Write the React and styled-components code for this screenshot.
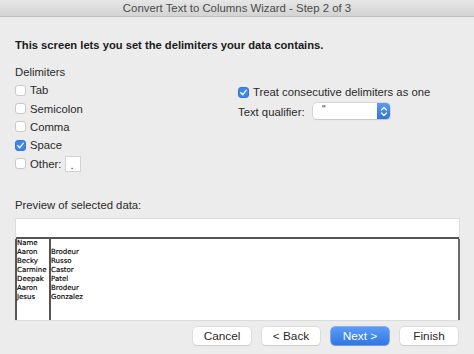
import React from "react";
import styled, { createGlobalStyle } from "styled-components";

const GlobalStyle = createGlobalStyle`
  html, body {
    margin: 0;
    padding: 0;
    background: #ececec;
  }
  body {
    font-family: "Liberation Sans", Arial, sans-serif;
    color: #222;
  }
`;

const Window = styled.div`
  width: 474px;
  height: 354px;
  background: #ececec;
  display: flex;
  flex-direction: column;
  overflow: hidden;
`;

const TitleBar = styled.div`
  height: 16px;
  background: linear-gradient(#e6e6e6, #d3d3d3);
  border-bottom: 1px solid #bdbdbd;
  display: flex;
  align-items: center;
  justify-content: center;
  font-size: 11.4px;
  color: #4b4b4b;
`;

const Body = styled.div`
  padding: 20px 15px 0 15px;
  display: flex;
  flex-direction: column;
`;

const Heading = styled.div`
  font-size: 11.2px;
  font-weight: bold;
  line-height: 16px;
  color: #1a1a1a;
`;

const Columns = styled.div`
  display: grid;
  grid-template-columns: 223px 1fr;
  margin-top: 10px;
`;

const Column = styled.div`
  display: flex;
  flex-direction: column;
  padding-top: ${(p) => p.$top || 0}px;
`;

const Label = styled.div`
  font-size: 11.3px;
  line-height: 16px;
  color: #2a2a2a;
  height: ${(p) => p.$h || 16}px;
  display: flex;
  align-items: center;
`;

const Row = styled.div`
  display: flex;
  align-items: center;
  height: 18.4px;
  gap: 4px;
  font-size: 11.3px;
  color: #2a2a2a;
`;

const Box = styled.span`
  width: 11px;
  height: 11px;
  border-radius: 3px;
  box-sizing: border-box;
  background: ${(p) => (p.$on ? "#3d86ee" : "#fff")};
  border: 1px solid ${(p) => (p.$on ? "#3579e0" : "#c9c9c9")};
  display: inline-flex;
  align-items: center;
  justify-content: center;
  flex-shrink: 0;
`;

const SmallInput = styled.span`
  width: 16px;
  height: 16px;
  box-sizing: border-box;
  background: #fff;
  border: 1px solid #d2d2d2;
  font-size: 11px;
  display: inline-flex;
  align-items: flex-end;
  padding: 0 0 2px 4px;
  line-height: 8px;
`;

const Select = styled.div`
  width: 77px;
  height: 16px;
  margin-top: -1px;
  background: #fff;
  border-radius: 4px;
  box-shadow: 0 0 0 0.5px #c4c4c4, 0 1px 1px rgba(0, 0, 0, 0.15);
  display: flex;
  overflow: hidden;
`;

const SelectValue = styled.div`
  flex: 1;
  font-size: 10px;
  padding-left: 9px;
  line-height: 14px;
  color: #333;
`;

const SelectArrow = styled.div`
  width: 13px;
  background: linear-gradient(#5a9bf5, #2e74e4);
  display: flex;
  align-items: center;
  justify-content: center;
`;

const QualifierRow = styled.div`
  display: flex;
  align-items: center;
  height: 19px;
  margin-top: 1px;
  font-size: 11.3px;
  color: #2a2a2a;
`;

const QualifierLabel = styled.span`
  width: 75px;
`;

const PreviewLabel = styled.div`
  font-size: 11.3px;
  color: #2a2a2a;
  margin-top: 24px;
  line-height: 16px;
`;

const Preview = styled.div`
  margin-top: 5px;
  width: 445px;
  height: 103px;
  background: #fff;
  border: 1px solid #dcdcdc;
  box-sizing: border-box;
  display: flex;
  flex-direction: column;
`;

const PreviewHeader = styled.div`
  height: 18px;
  border-bottom: 2px solid #555;
`;

const Table = styled.div`
  flex: 1;
  display: flex;
  border-left: 2px solid #555;
  border-right: 2px solid #6a6a6a;
  margin-left: -1px;
  margin-right: -1px;
`;

const Col = styled.div`
  width: ${(p) => (p.$w ? `${p.$w}px` : "auto")};
  flex: ${(p) => (p.$w ? "none" : 1)};
  border-right: ${(p) => (p.$w ? "2px solid #555" : "none")};
  padding: 0;
  font-family: "DejaVu Sans", sans-serif;
  font-size: 7px;
  line-height: 9px;
  color: #000;
  -webkit-text-stroke: 0.15px #000;
`;

const Cell = styled.div`
  white-space: nowrap;
`;

const Buttons = styled.div`
  display: flex;
  justify-content: flex-end;
  gap: 11px;
  margin-top: 6px;
  padding-right: 1px;
`;

const Button = styled.div`
  width: 58px;
  height: 18px;
  border-radius: 4px;
  box-sizing: border-box;
  display: flex;
  align-items: center;
  justify-content: center;
  font-size: 11.8px;
  color: ${(p) => (p.$primary ? "#fff" : "#2a2a2a")};
  background: ${(p) =>
    p.$primary ? "linear-gradient(#5c9cf6, #2f76e6)" : "#fff"};
  box-shadow: ${(p) =>
    p.$primary
      ? "0 0 0 0.5px #2f6fd6, 0 1px 1px rgba(0,0,0,0.15)"
      : "0 0 0 0.5px #cfcfcf, 0 1px 1px rgba(0,0,0,0.15)"};
`;

const Check = () => (
  <svg width="9" height="9" viewBox="0 0 10 10">
    <path
      d="M2 5.2 L4.2 7.4 L8 2.6"
      fill="none"
      stroke="#fff"
      strokeWidth="1.6"
      strokeLinecap="round"
      strokeLinejoin="round"
    />
  </svg>
);

const Checkbox = ({ on }) => <Box $on={on}>{on && <Check />}</Box>;

const Arrows = () => (
  <svg width="8" height="11" viewBox="0 0 8 11">
    <path
      d="M1.5 4 L4 1.5 L6.5 4 M1.5 7 L4 9.5 L6.5 7"
      fill="none"
      stroke="#fff"
      strokeWidth="1.3"
      strokeLinecap="round"
      strokeLinejoin="round"
    />
  </svg>
);

const firstNames = ["Name", "Aaron", "Becky", "Carmine", "Deepak", "Aaron", "Jesus"];
const lastNames = ["", "Brodeur", "Russo", "Castor", "Patel", "Brodeur", "Gonzalez"];

const delimiters = [
  { label: "Tab", on: false },
  { label: "Semicolon", on: false },
  { label: "Comma", on: false },
  { label: "Space", on: true },
];

export default function App() {
  return (
    <Window>
      <GlobalStyle />
      <TitleBar>Convert Text to Columns Wizard - Step 2 of 3</TitleBar>
      <Body>
        <Heading>This screen lets you set the delimiters your data contains.</Heading>
        <Columns>
          <Column>
            <Label $h={18}>Delimiters</Label>
            {delimiters.map((d) => (
              <Row key={d.label}>
                <Checkbox on={d.on} />
                {d.label}
              </Row>
            ))}
            <Row>
              <Checkbox on={false} />
              Other:
              <SmallInput>.</SmallInput>
            </Row>
          </Column>
          <Column $top={20}>
            <Row>
              <Checkbox on />
              Treat consecutive delimiters as one
            </Row>
            <QualifierRow>
              <QualifierLabel>Text qualifier:</QualifierLabel>
              <Select>
                <SelectValue>"</SelectValue>
                <SelectArrow>
                  <Arrows />
                </SelectArrow>
              </Select>
            </QualifierRow>
          </Column>
        </Columns>
        <PreviewLabel>Preview of selected data:</PreviewLabel>
        <Preview>
          <PreviewHeader />
          <Table>
            <Col $w={32}>
              {firstNames.map((n, i) => (
                <Cell key={i}>{n}</Cell>
              ))}
            </Col>
            <Col>
              {lastNames.map((n, i) => (
                <Cell key={i}>{n || "\u00a0"}</Cell>
              ))}
            </Col>
          </Table>
        </Preview>
        <Buttons>
          <Button>Cancel</Button>
          <Button>&lt; Back</Button>
          <Button $primary>Next &gt;</Button>
          <Button>Finish</Button>
        </Buttons>
      </Body>
    </Window>
  );
}
